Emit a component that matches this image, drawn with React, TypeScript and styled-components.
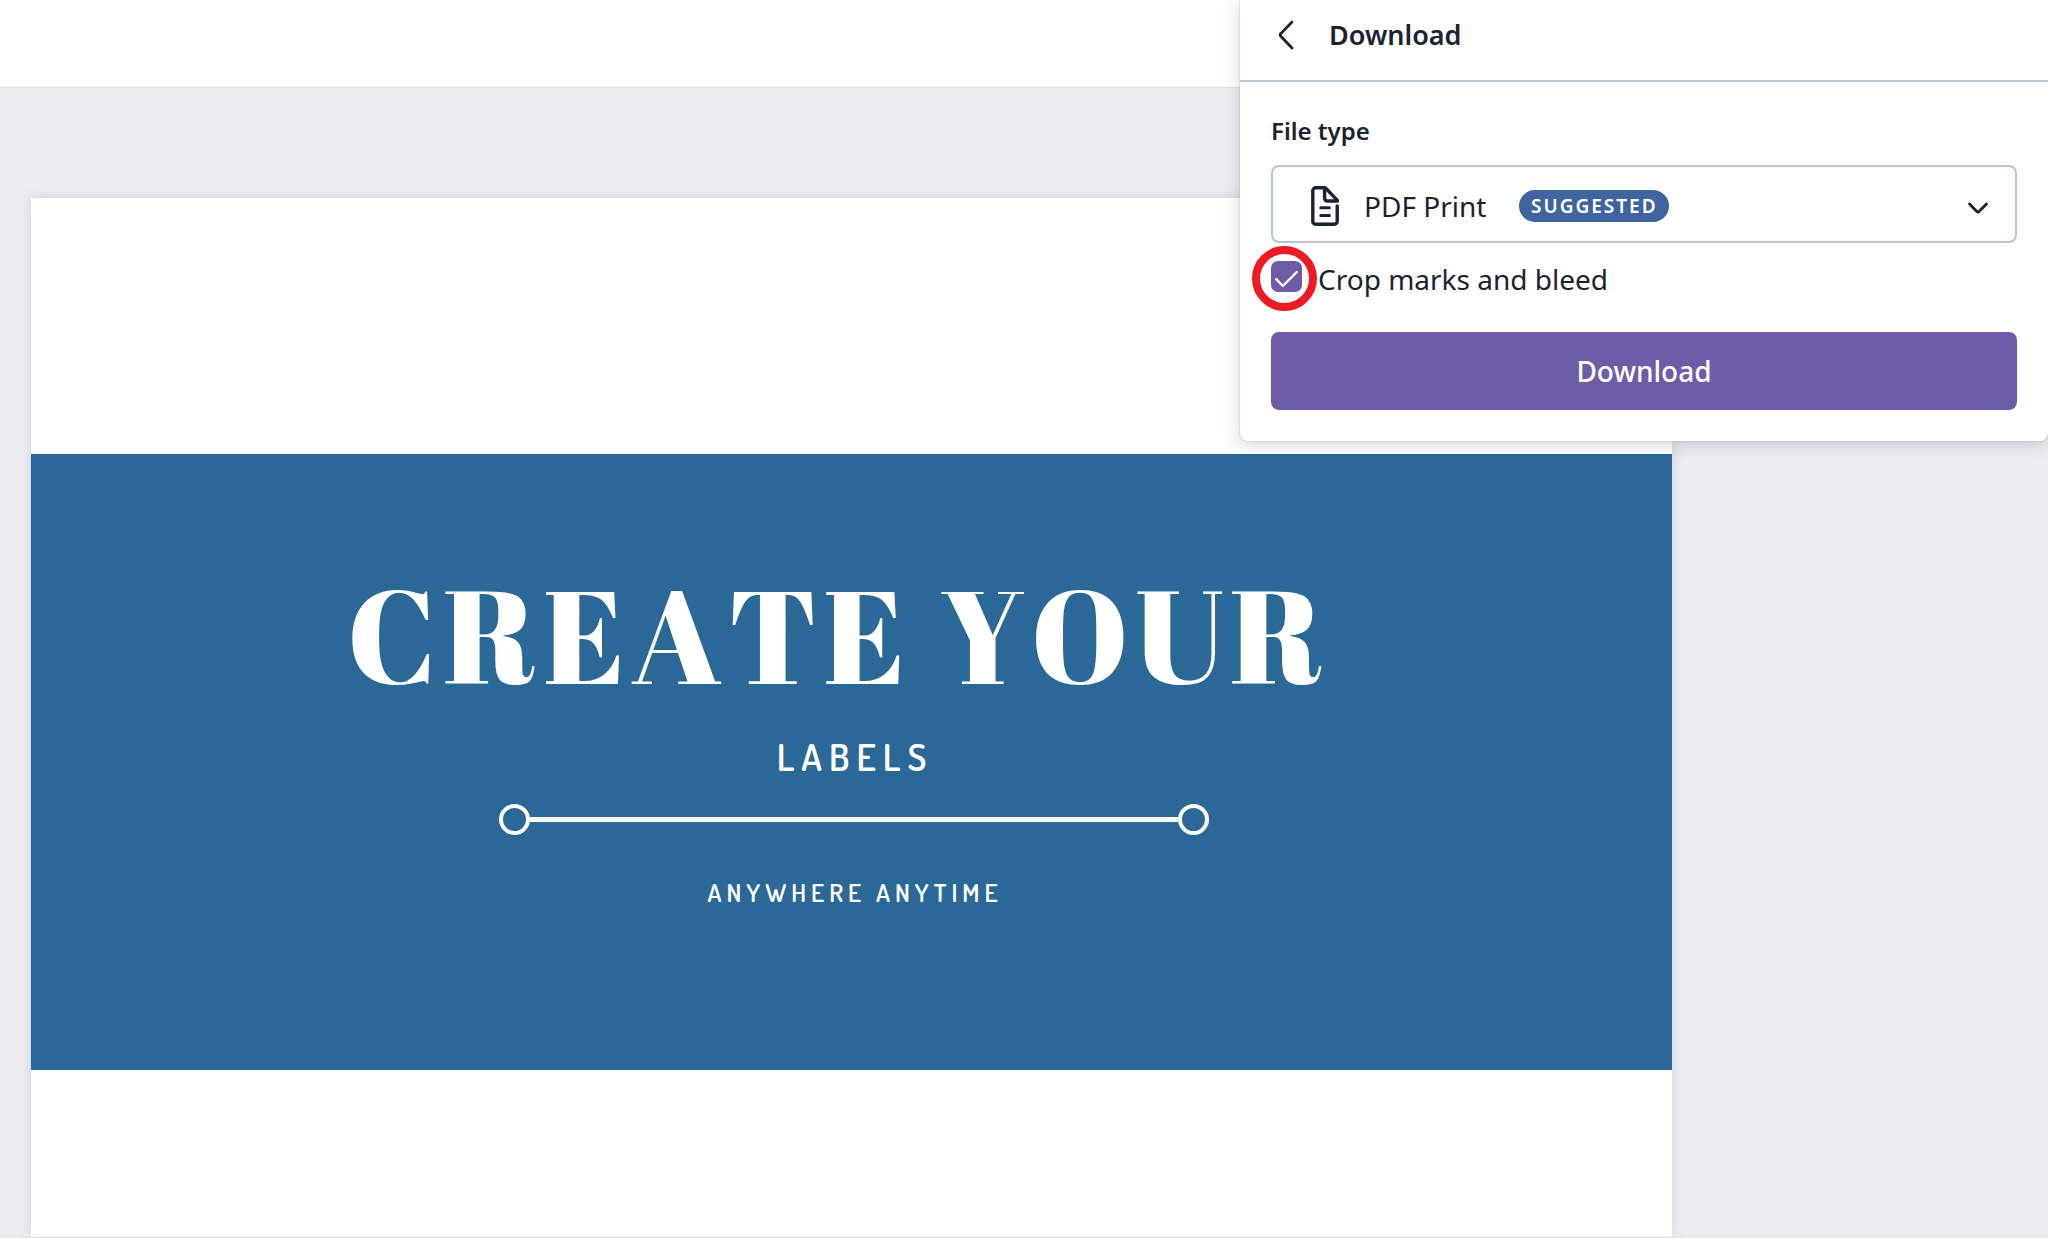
import styled, { createGlobalStyle } from "styled-components";

const Global = createGlobalStyle`
  *, *::before, *::after { box-sizing: border-box; }
  body {
    margin: 0;
    background: #ecedf1;
    color: #1b2230;
    font-family: "Noto Sans", "Open Sans", sans-serif;
  }
  h1, h2, p { margin: 0; }
  button, select, input { font: inherit; color: inherit; }
`;

const purple = "#6f5ca8";
const blue = "#2a6898";
const line = "#b9c4d4";

const Editor = styled.div`
  position: relative;
  display: flex;
  flex-direction: column;
  min-height: 100vh;
  overflow: hidden;
`;

const TopBar = styled.header`
  height: 88px;
  background: #fff;
  border-bottom: 1px solid #dfe1e9;
`;

const Workspace = styled.main`
  flex: 1;
  display: flex;
  padding: 110px 376px 0 31px;
  border-bottom: 1px solid #e3e4ea;
`;

const Page = styled.article`
  flex: 1;
  padding-top: 256px;
  background: #fff;
  box-shadow: 0 0 12px rgba(60, 70, 110, 0.16);
`;

const Artwork = styled.section`
  display: flex;
  flex-direction: column;
  align-items: center;
  padding: 90px 0 154px 4px;
  background: ${blue};
  color: #fff;
`;

const Headline = styled.h1`
  margin-bottom: 9px;
  padding-right: 30px;
  font-family: "Abril Fatface", "Playfair Display", "Liberation Serif", serif;
  font-size: 131px;
  font-weight: 400;
  font-kerning: none;
  line-height: 180px;
  letter-spacing: 6px;
  white-space: nowrap;
`;

const Caption = styled.p<{ $size: number; $gap: number }>`
  padding-left: 3px;
  font-family: "Dosis", "Roboto Condensed", Roboto, sans-serif;
  font-size: ${(p) => p.$size}px;
  font-weight: 600;
  line-height: 48px;
  letter-spacing: ${(p) => p.$gap}px;
  text-transform: uppercase;
`;

const Divider = styled.div`
  display: flex;
  align-items: center;
  width: 710px;
  margin: 23px 0 33px;
`;

const Dot = styled.span`
  width: 31px;
  height: 31px;
  border: 4px solid #fff;
  border-radius: 50%;
`;

const Rule = styled.span`
  flex: 1;
  height: 5px;
  background: #fff;
`;

const Panel = styled.aside`
  position: absolute;
  top: 0;
  right: 0;
  width: 808px;
  max-width: 100%;
  background: #fff;
  border-radius: 0 0 8px 8px;
  box-shadow: 0 0 2px rgba(60, 75, 110, 0.3), 0 4px 18px rgba(60, 75, 110, 0.22);
`;

const PanelHeader = styled.div`
  display: flex;
  align-items: center;
  gap: 28px;
  height: 82px;
  padding: 0 31px 11px;
  border-bottom: 2px solid ${line};
`;

const BackButton = styled.button`
  display: grid;
  place-items: center;
  width: 30px;
  height: 40px;
  padding: 0;
  border: 0;
  background: none;
`;

const PanelTitle = styled.h2`
  font-size: 27px;
  font-weight: 600;
  line-height: 40px;
`;

const Form = styled.form`
  display: flex;
  flex-direction: column;
  padding: 31px;
`;

const FieldLabel = styled.label`
  margin-bottom: 16px;
  font-size: 24px;
  font-weight: 600;
  line-height: 36px;
`;

const SelectBox = styled.div`
  display: flex;
  align-items: center;
  height: 78px;
  padding: 3px 26px 0 38px;
  border: 2px solid ${line};
  border-radius: 8px;
`;

const TypeSelect = styled.select`
  appearance: none;
  margin: 0 32px 0 25px;
  padding: 0;
  border: 0;
  background: none;
  font-size: 28px;
  line-height: 40px;
`;

const Badge = styled.span`
  margin-right: auto;
  padding: 1px 11px 0 12px;
  border-radius: 16px;
  background: #4064a0;
  color: #fff;
  font-size: 19px;
  font-weight: 600;
  line-height: 31px;
  letter-spacing: 2px;
`;

const CheckRow = styled.div`
  display: flex;
  align-items: center;
  gap: 16px;
  height: 67px;
  margin-bottom: 22px;
`;

const CheckMark = styled.span`
  position: relative;
  display: grid;
  width: 31px;
  height: 31px;

  > * { grid-area: 1 / 1; }
  > svg { pointer-events: none; }
`;

const CheckInput = styled.input`
  appearance: none;
  width: 31px;
  height: 31px;
  margin: 0;
  border-radius: 7px;
  background: #fff;
  box-shadow: inset 0 0 0 2px ${line};

  &:checked { background: ${purple}; box-shadow: none; }
`;

const Highlight = styled.span`
  position: absolute;
  top: -15px;
  left: -19px;
  width: 65px;
  height: 65px;
  border: 8px solid #ed1c24;
  border-radius: 50%;
  pointer-events: none;
`;

const CheckLabel = styled.label`
  padding-top: 4px;
  font-size: 28px;
  line-height: 40px;
`;

const DownloadButton = styled.button`
  height: 78px;
  border: 0;
  border-radius: 8px;
  background: ${purple};
  color: #fff;
  font-size: 28px;
  font-weight: 500;
`;

const BackIcon = () => (
  <svg width="16" height="30" viewBox="0 0 16 30" fill="none" stroke="currentColor" strokeWidth="2.8" strokeLinecap="round" strokeLinejoin="round">
    <path d="M14 2 2.8 13.6a1.8 1.8 0 0 0 0 2.6L14 28" />
  </svg>
);

const DocumentIcon = () => (
  <svg width="28" height="40" viewBox="0 0 28 40" fill="none" stroke="currentColor" strokeWidth="3.4" strokeLinecap="round" strokeLinejoin="round">
    <path d="M26.2 20v15.4a2.8 2.8 0 0 1-2.8 2.8H4.6a2.8 2.8 0 0 1-2.8-2.8V4.6a2.8 2.8 0 0 1 2.8-2.8h8.6a3 3 0 0 1 2.1.9l10.6 11.1" />
    <path d="M13.6 2.4v9.8a2.8 2.8 0 0 0 2.8 2.8h10" />
    <path d="M9.8 21.8h8.6M9.8 29.6h8.6" strokeWidth="3" />
  </svg>
);

const ChevronIcon = () => (
  <svg width="22" height="20" viewBox="0 0 22 20" fill="none" stroke="currentColor" strokeWidth="2.8" strokeLinecap="round" strokeLinejoin="round">
    <path d="m2.5 8 7.4 7.4a1.6 1.6 0 0 0 2.2 0l7.4-7.4" />
  </svg>
);

const TickIcon = () => (
  <svg width="31" height="31" viewBox="0 0 31 31" fill="none" stroke="#fff" strokeWidth="2.4" strokeLinecap="round" strokeLinejoin="round">
    <path d="m5.2 18.2 6.6 6.8L25.8 11" />
  </svg>
);

export default function App() {
  return (
    <Editor>
      <Global />
      <TopBar />
      <Workspace>
        <Page>
          <Artwork>
            <Headline>CREATE YOUR</Headline>
            <Caption $size={37} $gap={7}>Labels</Caption>
            <Divider>
              <Dot />
              <Rule />
              <Dot />
            </Divider>
            <Caption $size={25} $gap={5}>Anywhere Anytime</Caption>
          </Artwork>
        </Page>
      </Workspace>

      <Panel>
        <PanelHeader>
          <BackButton type="button" aria-label="Back">
            <BackIcon />
          </BackButton>
          <PanelTitle>Download</PanelTitle>
        </PanelHeader>
        <Form onSubmit={(e) => e.preventDefault()}>
          <FieldLabel htmlFor="file-type">File type</FieldLabel>
          <SelectBox>
            <DocumentIcon />
            <TypeSelect id="file-type" defaultValue="pdf-print">
              <option value="pdf-print">PDF Print</option>
            </TypeSelect>
            <Badge>SUGGESTED</Badge>
            <ChevronIcon />
          </SelectBox>
          <CheckRow>
            <CheckMark>
              <CheckInput id="crop-marks" type="checkbox" defaultChecked />
              <TickIcon />
              <Highlight />
            </CheckMark>
            <CheckLabel htmlFor="crop-marks">Crop marks and bleed</CheckLabel>
          </CheckRow>
          <DownloadButton type="submit">Download</DownloadButton>
        </Form>
      </Panel>
    </Editor>
  );
}
